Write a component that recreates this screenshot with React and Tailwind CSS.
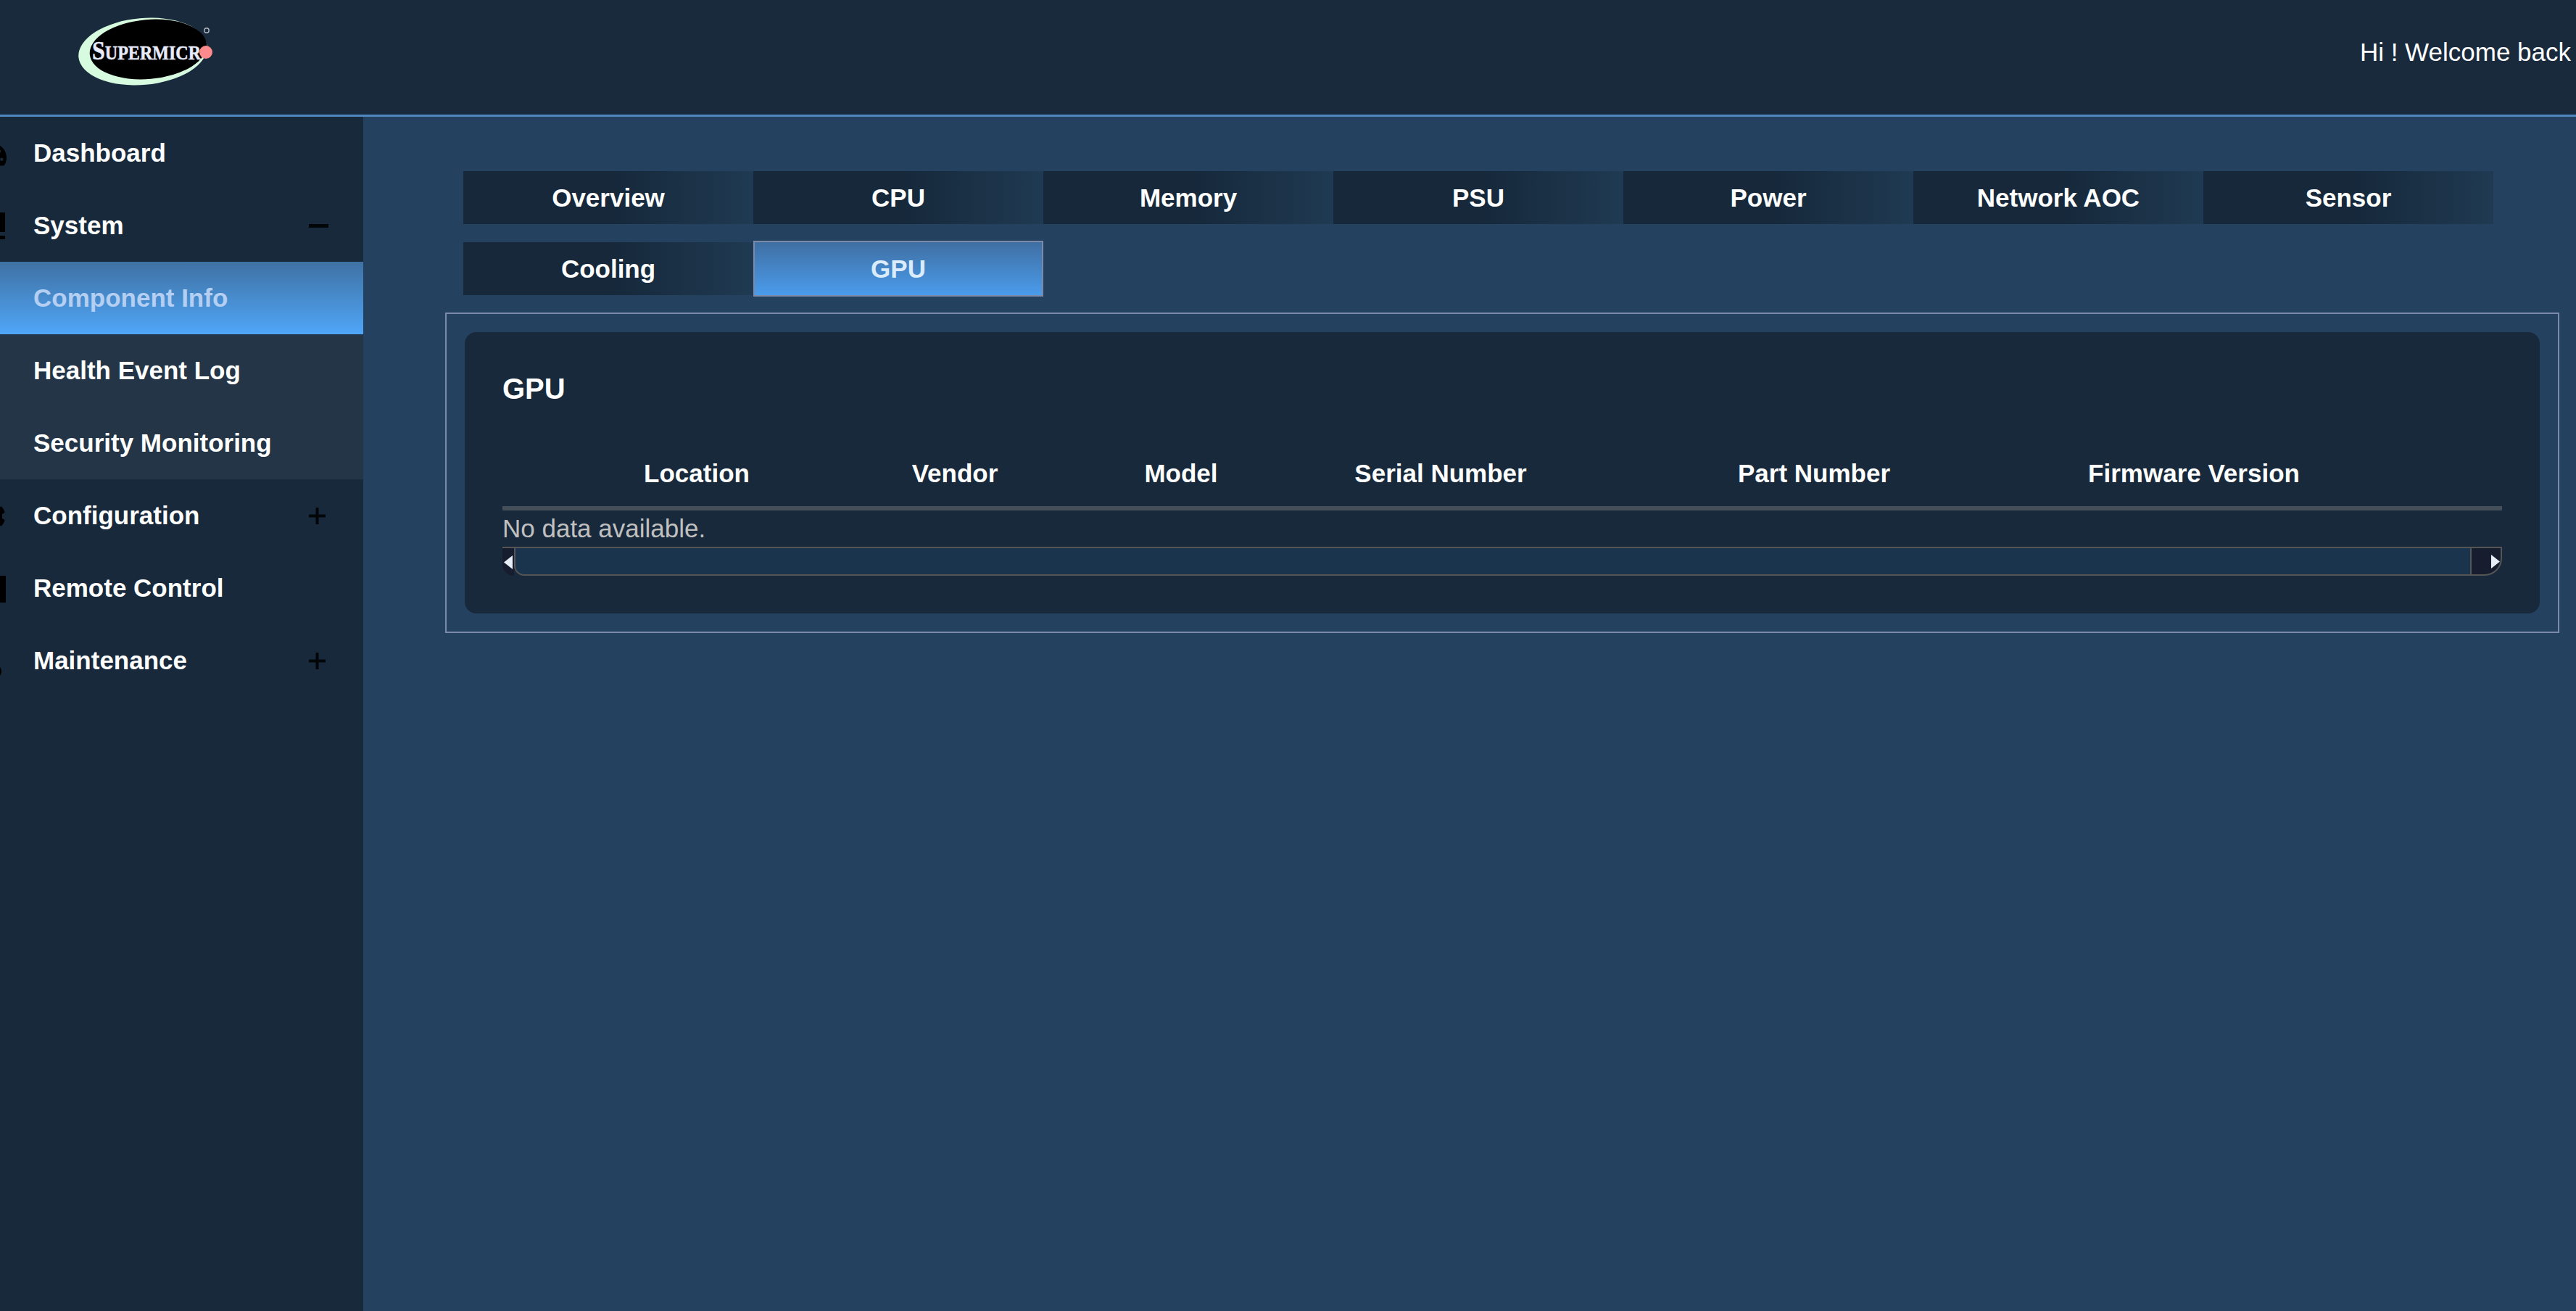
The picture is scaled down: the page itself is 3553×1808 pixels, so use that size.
import { FaTachometerAlt, FaCog } from "react-icons/fa";

const tabs = ["Overview", "CPU", "Memory", "PSU", "Power", "Network AOC", "Sensor", "Cooling", "GPU"];

const DesktopEdge = ({ className }) => (
  <svg width="7" height="37" viewBox="0 0 7 37" className={className}>
    <rect width="7" height="27" fill="#000" />
    <rect y="32" width="7" height="5" fill="#000" />
  </svg>
);

const RemoteEdge = ({ className }) => (
  <svg width="8" height="37" viewBox="0 0 8 37" className={className}>
    <rect width="8" height="37" fill="#000" />
  </svg>
);

const WrenchEdge = ({ className }) => (
  <svg width="3" height="12" viewBox="0 0 3 12" className={className}>
    <polygon points="0,0 2,4 2,8 0,12" fill="#000" />
  </svg>
);

const menu = [
  { label: "Dashboard", icon: FaTachometerAlt, iconClass: "-left-[31px] top-[32px] text-[40px]" },
  { label: "System", icon: DesktopEdge, iconClass: "left-0 top-[32px]", sign: "minus" },
  { label: "Component Info", active: true },
  { label: "Health Event Log", sub: true },
  { label: "Security Monitoring", sub: true },
  { label: "Configuration", icon: FaCog, iconClass: "-left-[32px] top-[31px] text-[40px]", sign: "plus" },
  { label: "Remote Control", icon: RemoteEdge, iconClass: "left-0 top-[33px]" },
  { label: "Maintenance", icon: WrenchEdge, iconClass: "left-0 top-[59px]", sign: "plus" },
];

const columns = ["Location", "Vendor", "Model", "Serial Number", "Part Number", "Firmware Version"];

const Logo = () => (
  <svg width="200" height="110" viewBox="100 14 200 110" className="mt-[14px] ml-[100px] shrink-0">
    <ellipse cx="197" cy="71" rx="89" ry="46" transform="rotate(-5 197 71)" fill="#d6fbdf" />
    <ellipse cx="204.5" cy="68" rx="81" ry="41" transform="rotate(-5 204.5 68)" fill="#000" />
    <text x="127" y="82" fontFamily="Liberation Serif" fontWeight="700" fill="#e8ebfb" stroke="#e8ebfb" strokeWidth="0.5" fontSize="27" textLength="150" lengthAdjust="spacingAndGlyphs">
      <tspan fontSize="36">S</tspan>UPERMICR
    </text>
    <circle cx="284" cy="72" r="9" fill="#fd8b8d" />
    <circle cx="285" cy="42" r="3.2" fill="none" stroke="#b0b8c0" strokeWidth="1.4" />
  </svg>
);

const Sign = ({ type }) =>
  type === "minus" ? (
    <span className="absolute left-[426px] top-[48px] h-[5px] w-[27px] bg-[#030608]" />
  ) : (
    <svg width="23" height="23" viewBox="0 0 23 23" className="absolute left-[426px] top-[39px]">
      <path d="M0 11.5H23M11.5 0V23" stroke="#030608" strokeWidth="4" />
    </svg>
  );

const MenuItem = ({ item }) => {
  const Icon = item.icon;
  let rowClass = "bg-[#17293b] text-white";
  if (item.active) rowClass = "bg-linear-to-b from-[#3f72a4] to-[#4fa6f8] text-[#b4cff2]";
  if (item.sub) rowClass = "bg-[#233546] text-white";
  return (
    <div className={`relative flex h-[100px] items-center overflow-hidden pl-[46px] font-bold ${rowClass}`}>
      {Icon && <Icon className={`absolute text-black ${item.iconClass}`} />}
      <span>{item.label}</span>
      {item.sign && <Sign type={item.sign} />}
    </div>
  );
};

const Tab = ({ label }) => {
  const active = label === "GPU";
  return (
    <div
      className={
        active
          ? "flex h-[77px] w-[400px] items-center justify-center border-2 border-[#7a8aa8] bg-linear-to-b from-[#3f6fa3] to-[#4a9cec] pt-[2px] font-bold text-[#daecfb]"
          : "flex h-[77px] w-[400px] items-center justify-center border-y-2 border-transparent bg-linear-to-r from-[#16283a] from-50% to-[#1f3a52] bg-clip-padding pt-[2px] font-bold text-white"
      }
    >
      {label}
    </div>
  );
};

const Scrollbar = () => (
  <div className="flex h-[40px]">
    <div className="flex w-[16px] items-center justify-center rounded-bl-[16px] border-t-2 border-[#555] bg-[#161d2e]">
      <svg width="12" height="19" viewBox="0 0 12 19">
        <polygon points="12,0 12,19 0,9.5" fill="#e8eef5" />
      </svg>
    </div>
    <div className="flex-1 rounded-bl-[14px] border-2 border-[#555] bg-[#1a344d]" />
    <div className="flex w-[42px] items-center justify-end rounded-br-[24px] border-y-2 border-r-2 border-[#555] bg-[#161d2e] pr-[1px]">
      <svg width="12" height="19" viewBox="0 0 12 19">
        <polygon points="0,0 12,9.5 0,19" fill="#e8eef5" />
      </svg>
    </div>
  </div>
);

export default function App() {
  return (
    <div className="flex h-screen flex-col overflow-hidden bg-[#24415f] font-['Liberation_Sans',Arial,sans-serif] text-[35px]">
      <header className="flex h-[161px] shrink-0 items-start justify-between border-b-[3px] border-[#4f87c0] bg-[#182a3c]">
        <Logo />
        <div className="mt-[52px] pr-[7px] leading-[40px] text-white">Hi ! Welcome back</div>
      </header>
      <div className="flex flex-1">
        <nav className="w-[501px] shrink-0 bg-[#17293b]">
          {menu.map((item) => (
            <MenuItem key={item.label} item={item} />
          ))}
        </nav>
        <main className="flex-1 pt-[73px] pl-[113px]">
          <div className="ml-[25px] flex w-[2800px] flex-wrap gap-y-[21px]">
            {tabs.map((t) => (
              <Tab key={t} label={t} />
            ))}
          </div>
          <section className="mt-[22px] w-[2916px] border-2 border-[#7a8aa8] px-[25px] pt-[25px] pb-[25px]">
            <div className="rounded-[16px] bg-[#17293b] px-[52px] pb-[52px]">
              <h2 className="pt-[55px] text-[40px] leading-[46px] font-bold text-white">GPU</h2>
              <div className="mt-[74px] grid grid-cols-[536px_176px_448px_268px_756px_298px] border-b-[6px] border-[#454f5a] pb-[25px] text-center leading-[40px] font-bold whitespace-nowrap text-white">
                {columns.map((c) => (
                  <div key={c} className={c === "Part Number" ? "pl-[6px]" : ""}>
                    {c}
                  </div>
                ))}
              </div>
              <div className="h-[50px] leading-[50px] text-[#c0c0c0]">No data available.</div>
              <Scrollbar />
            </div>
          </section>
        </main>
      </div>
    </div>
  );
}
